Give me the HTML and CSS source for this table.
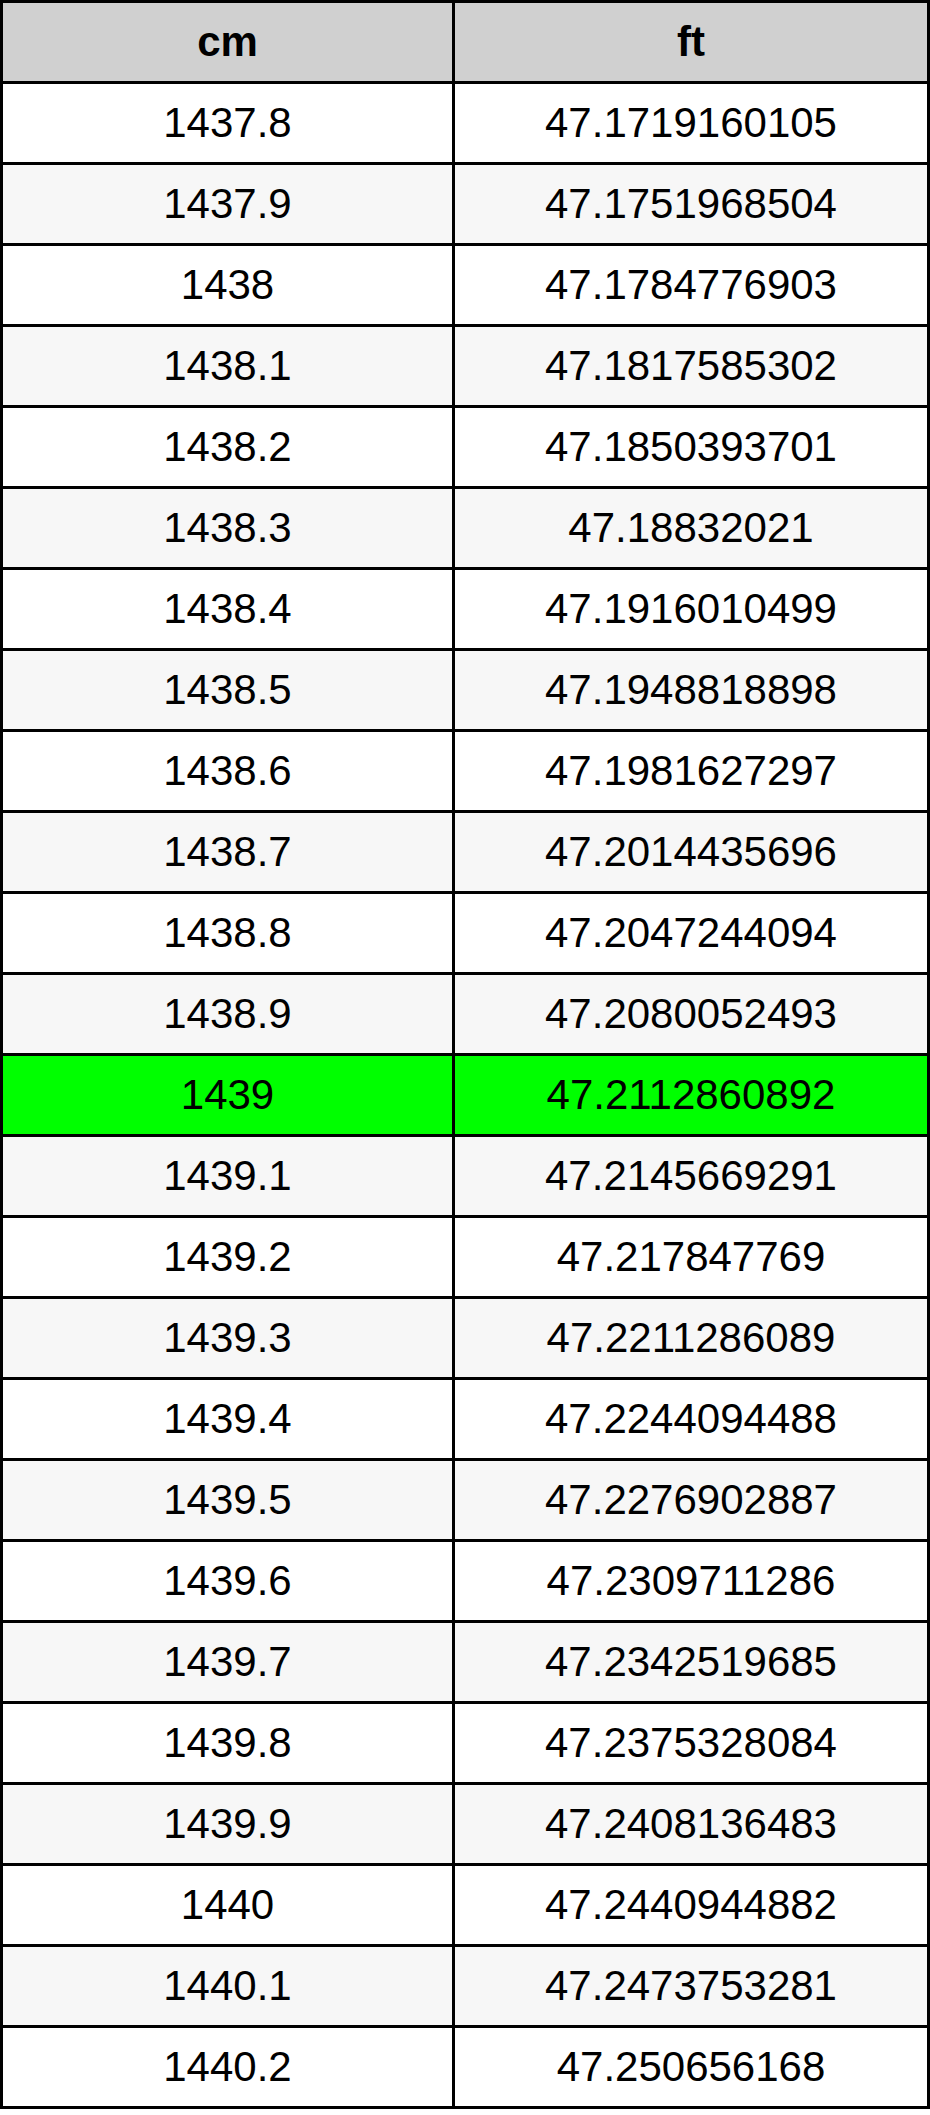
FILE: index.html
```html
<!DOCTYPE html>
<html>
<head>
<meta charset="utf-8">
<link rel="stylesheet" href="styles.css">
</head>
<body>
<div class="table">
  <div class="cell head">cm</div><div class="cell head">ft</div>
  <div class="cell">1437.8</div><div class="cell">47.1719160105</div>
  <div class="cell alt">1437.9</div><div class="cell alt">47.1751968504</div>
  <div class="cell">1438</div><div class="cell">47.1784776903</div>
  <div class="cell alt">1438.1</div><div class="cell alt">47.1817585302</div>
  <div class="cell">1438.2</div><div class="cell">47.1850393701</div>
  <div class="cell alt">1438.3</div><div class="cell alt">47.18832021</div>
  <div class="cell">1438.4</div><div class="cell">47.1916010499</div>
  <div class="cell alt">1438.5</div><div class="cell alt">47.1948818898</div>
  <div class="cell">1438.6</div><div class="cell">47.1981627297</div>
  <div class="cell alt">1438.7</div><div class="cell alt">47.2014435696</div>
  <div class="cell">1438.8</div><div class="cell">47.2047244094</div>
  <div class="cell alt">1438.9</div><div class="cell alt">47.2080052493</div>
  <div class="cell hl">1439</div><div class="cell hl">47.2112860892</div>
  <div class="cell alt">1439.1</div><div class="cell alt">47.2145669291</div>
  <div class="cell">1439.2</div><div class="cell">47.217847769</div>
  <div class="cell alt">1439.3</div><div class="cell alt">47.2211286089</div>
  <div class="cell">1439.4</div><div class="cell">47.2244094488</div>
  <div class="cell alt">1439.5</div><div class="cell alt">47.2276902887</div>
  <div class="cell">1439.6</div><div class="cell">47.2309711286</div>
  <div class="cell alt">1439.7</div><div class="cell alt">47.2342519685</div>
  <div class="cell">1439.8</div><div class="cell">47.2375328084</div>
  <div class="cell alt">1439.9</div><div class="cell alt">47.2408136483</div>
  <div class="cell">1440</div><div class="cell">47.2440944882</div>
  <div class="cell alt">1440.1</div><div class="cell alt">47.2473753281</div>
  <div class="cell">1440.2</div><div class="cell">47.250656168</div>
</div>
</body>
</html>
```
FILE: styles.css
```css
html, body {
  margin: 0;
  padding: 0;
  background: #ffffff;
}
.table {
  width: 930px;
  box-sizing: border-box;
  display: grid;
  grid-template-columns: 449px 472px;
  grid-auto-rows: 78px;
  gap: 3px;
  padding: 3px;
  background: #000000;
  font-family: "Liberation Sans", Arial, sans-serif;
  font-size: 42px;
  color: #000000;
}
.cell {
  display: flex;
  align-items: center;
  justify-content: center;
  background: #ffffff;
}
.cell.alt {
  background: #f7f7f7;
}
.cell.head {
  background: #d0d0d0;
  font-weight: bold;
}
.cell.hl {
  background: #00ff00;
}
```
